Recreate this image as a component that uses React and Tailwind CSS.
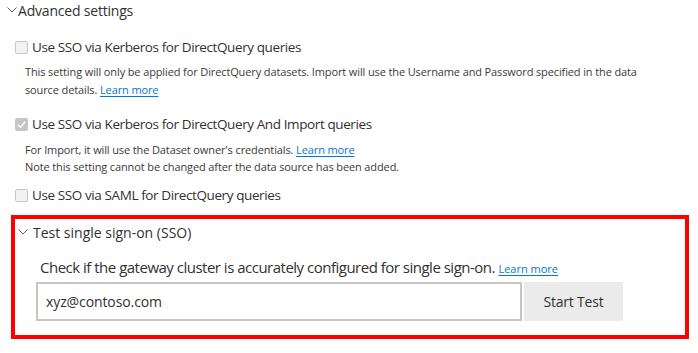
const font = { fontFamily: '"Open Sans", "Noto Sans", sans-serif' };

function Chevron({ className }) {
  return (
    <svg className={className} viewBox="0 0 10 6" fill="none" stroke="#605e5c" strokeWidth="1">
      <path d="M0.5 0.5 L5 5 L9.5 0.5" />
    </svg>
  );
}

function Check() {
  return (
    <svg viewBox="0 0 12 12" className="w-[11px] h-[11px]" fill="none" stroke="#ffffff" strokeWidth="1.6">
      <path d="M2 6.3 L4.8 9 L10 3" />
    </svg>
  );
}

function Option({ label, checked, className }) {
  return (
    <div className={"flex items-center h-[20px] pl-[15px] " + className}>
      {checked ? (
        <span className="w-[13px] h-[13px] shrink-0 rounded-[2px] bg-[#c8c6c4] flex items-center justify-center">
          <Check />
        </span>
      ) : (
        <span className="w-[13px] h-[13px] shrink-0 rounded-[2px] border border-[#c8c6c4] bg-[#f3f2f1]" />
      )}
      <span className="ml-[4px] text-[13.5px] tracking-[-0.4px] text-[#323130] whitespace-nowrap">{label}</span>
    </div>
  );
}

function Link() {
  return <a className="text-[#0078d4] underline underline-offset-2">Learn more</a>;
}

export default function App() {
  return (
    <div className="w-[698px] h-[353px] bg-white overflow-hidden" style={font}>
      <div className="flex items-center h-[20px] pl-[7px]">
        <Chevron className="w-[10px] h-[6px]" />
        <span className="ml-[1px] text-[14px] tracking-[-0.2px] text-[#323130]">Advanced settings</span>
      </div>

      <Option className="mt-[17px]" label="Use SSO via Kerberos for DirectQuery queries" />
      <div className="mt-[6px] pl-[25px] text-[11px] leading-[18px] tracking-[-0.12px] text-[#3b3a39] whitespace-nowrap">
        <p>This setting will only be applied for DirectQuery datasets. Import will use the Username and Password specified in the data</p>
        <p>source details. <Link /></p>
      </div>

      <Option className="mt-[15px]" checked label="Use SSO via Kerberos for DirectQuery And Import queries" />
      <div className="mt-[7px] pl-[25px] text-[11px] leading-[17px] tracking-[-0.12px] text-[#3b3a39] whitespace-nowrap">
        <p>For Import, it will use the Dataset owner's credentials. <Link /></p>
        <p>Note this setting cannot be changed after the data source has been added.</p>
      </div>

      <Option className="mt-[10px]" label="Use SSO via SAML for DirectQuery queries" />

      <div className="mt-[10px] ml-[11px] w-[678px] border-4 border-[#ff0000] pt-[3px] pb-[14px]">
        <div className="flex items-center h-[20px] pl-[3px]">
          <Chevron className="w-[10px] h-[6px]" />
          <span className="ml-[5px] text-[14px] text-[#323130]">Test single sign-on (SSO)</span>
        </div>
        <p className="mt-[16px] pl-[25px] h-[18px] leading-[18px] text-[15px] tracking-[-0.5px] text-[#323130] whitespace-nowrap">
          Check if the gateway cluster is accurately configured for single sign-on.{" "}
          <span className="text-[11px] tracking-normal"><Link /></span>
        </p>
        <div className="mt-[6px] pl-[21px] flex">
          <div className="w-[486px] h-[39px] border-2 border-[#c8c6c4] flex items-center pl-[8px] text-[14px] tracking-[-0.1px] text-[#323130]">
            xyz@contoso.com
          </div>
          <button className="ml-[2px] w-[99px] h-[39px] bg-[#ebebeb] text-[14px] tracking-[-0.2px] text-[#323130]">Start Test</button>
        </div>
      </div>
    </div>
  );
}
